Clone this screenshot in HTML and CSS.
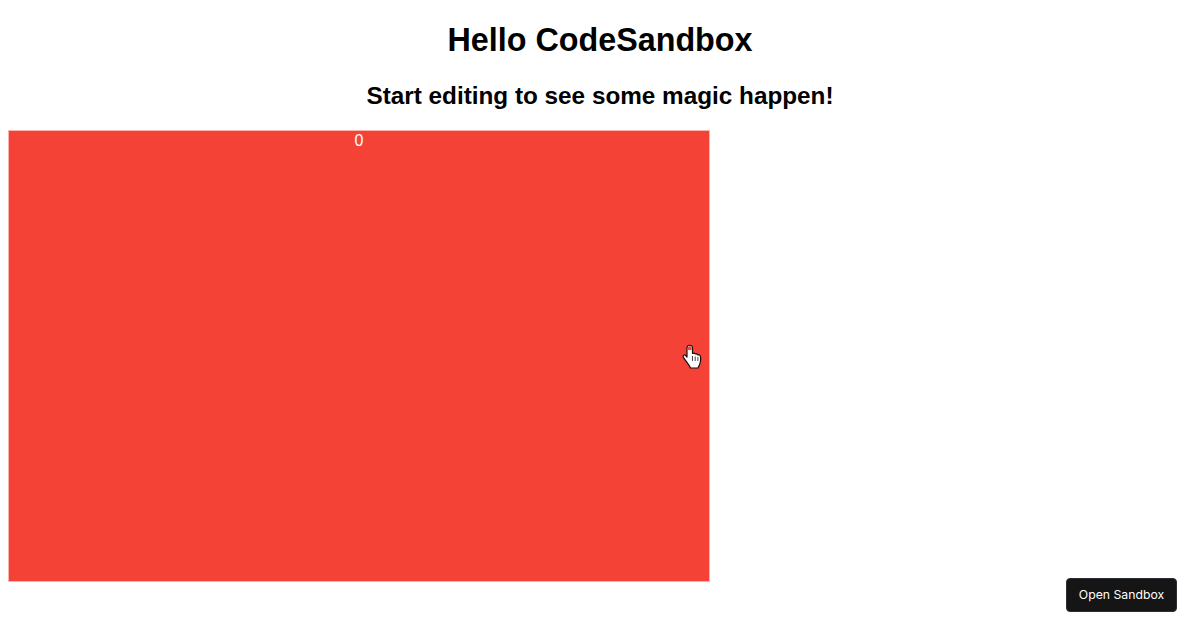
FILE: index.html
```html
<!DOCTYPE html>
<html lang="en">
<head>
<meta charset="utf-8">
<title>Hello CodeSandbox</title>
<link rel="stylesheet" href="styles.css">
</head>
<body>
<div class="app">
  <h1 class="title">Hello CodeSandbox</h1>
  <h2 class="subtitle">Start editing to see some magic happen!</h2>
  <div class="panel">
    <div class="count">0</div>
    <svg class="cursor" width="20" height="26" viewBox="0 0 20 26" aria-hidden="true">
      <path d="M5 4C5 .3 10.500 .3 10.500 4V9.500c1-.4 2.200-.3 2.800.5 1-.3 2.100 0 2.600.9 1.100-.3 2.300.3 2.500 1.400.4 2 .2 5-.4 7-.5 1.700-1.300 3-2 4.700H8.500c-1-2.400-2.900-4.600-4.500-6.900L1.400 13.300c-.9-1.500.9-3 2.200-1.900L5 13z" fill="#fff" stroke="#141010" stroke-width="1.200" stroke-linejoin="round"/>
      <path d="M5.900 6V4c0-2.400 3.700-2.400 3.700 0V6z" fill="#f44336"/>
      <path d="M10.500 12v5M13.200 12.500V17M15.900 13V17" fill="none" stroke="#333" stroke-width="0.900"/>
    </svg>
  </div>
</div>
<a class="open-btn" href="#">Open Sandbox</a>
</body>
</html>
```
FILE: styles.css
```css
html, body {
  background: #fff;
}
body {
  margin: 8px;
  font-family: "Liberation Sans", Arial, sans-serif;
  color: #000;
}
.app {
  text-align: center;
}
.title {
  font-size: 32.3px;
  font-weight: 700;
  margin: 14px 0 21px;
}
.subtitle {
  font-size: 24.3px;
  font-weight: 700;
  margin: 23px 0 20px;
}
.panel {
  position: relative;
  box-sizing: border-box;
  width: 702px;
  height: 452px;
  background: #f44336;
  border: 1px solid #fbb4ae;
  color: #fff;
  font-size: 16px;
  text-align: center;
}
.count {
  line-height: 19px;
}
.cursor {
  position: absolute;
  left: 673px;
  top: 213px;
}
.open-btn {
  position: fixed;
  right: 23px;
  bottom: 18px;
  box-sizing: border-box;
  width: 111px;
  height: 34px;
  padding-bottom: 2px;
  display: flex;
  align-items: center;
  justify-content: center;
  background: #151515;
  border: 1px solid #2b2f36;
  border-radius: 4px;
  color: #fff;
  font-family: Inter, "Liberation Sans", sans-serif;
  font-size: 12.250px;
  text-decoration: none;
}
```
